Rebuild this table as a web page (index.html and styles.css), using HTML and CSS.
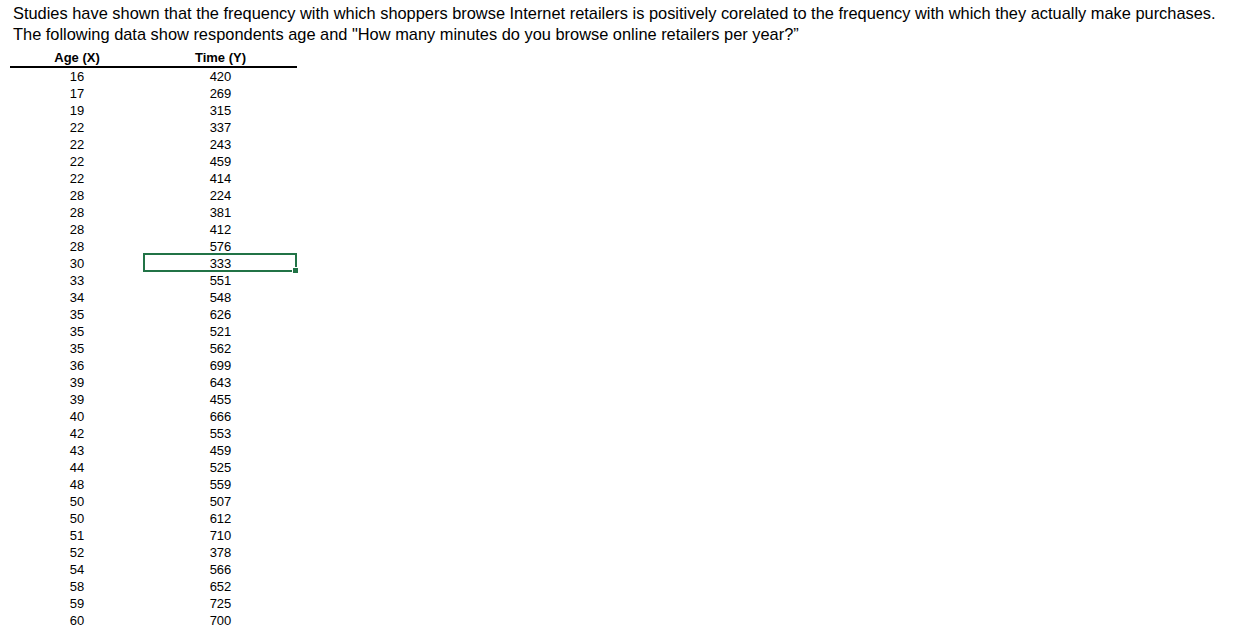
FILE: index.html
```html
<!DOCTYPE html>
<html lang="en">
<head>
  <meta charset="UTF-8">
  <title>Age vs browsing time</title>
  <link rel="stylesheet" href="styles.css">
</head>
<body>

  <p class="intro">
    Studies have shown that the frequency with which shoppers browse Internet retailers is positively corelated to the frequency with which they actually make purchases.<br>
    The following data show respondents age and "How many minutes do you browse online retailers per year?”
  </p>

  <table class="sheet">
    <thead>
      <tr><th class="col-x">Age (X)</th><th class="col-y">Time (Y)</th></tr>
    </thead>
    <tbody>
      <tr><td>16</td><td>420</td></tr>
      <tr><td>17</td><td>269</td></tr>
      <tr><td>19</td><td>315</td></tr>
      <tr><td>22</td><td>337</td></tr>
      <tr><td>22</td><td>243</td></tr>
      <tr><td>22</td><td>459</td></tr>
      <tr><td>22</td><td>414</td></tr>
      <tr><td>28</td><td>224</td></tr>
      <tr><td>28</td><td>381</td></tr>
      <tr><td>28</td><td>412</td></tr>
      <tr><td>28</td><td>576</td></tr>
      <tr><td>30</td><td class="selected">333</td></tr>
      <tr><td>33</td><td>551</td></tr>
      <tr><td>34</td><td>548</td></tr>
      <tr><td>35</td><td>626</td></tr>
      <tr><td>35</td><td>521</td></tr>
      <tr><td>35</td><td>562</td></tr>
      <tr><td>36</td><td>699</td></tr>
      <tr><td>39</td><td>643</td></tr>
      <tr><td>39</td><td>455</td></tr>
      <tr><td>40</td><td>666</td></tr>
      <tr><td>42</td><td>553</td></tr>
      <tr><td>43</td><td>459</td></tr>
      <tr><td>44</td><td>525</td></tr>
      <tr><td>48</td><td>559</td></tr>
      <tr><td>50</td><td>507</td></tr>
      <tr><td>50</td><td>612</td></tr>
      <tr><td>51</td><td>710</td></tr>
      <tr><td>52</td><td>378</td></tr>
      <tr><td>54</td><td>566</td></tr>
      <tr><td>58</td><td>652</td></tr>
      <tr><td>59</td><td>725</td></tr>
      <tr><td>60</td><td>700</td></tr>
    </tbody>
  </table>

</body>
</html>
```

FILE: styles.css
```css
:root{
  --excel-green:#217346;
}

*{ box-sizing:border-box; }
html,body{
  margin:0; padding:0;
  background:#fff;
  color:#000;
  font-family:"Liberation Sans", Arial, sans-serif;
}

/* ===== question text ===== */
.intro{
  margin:0;
  padding:3px 13px 0;
  font-size:16.4px;
  line-height:21px;
}

/* ===== data table ===== */
.sheet{
  margin-left:10px;
  border-collapse:collapse;
  font-size:13px;
}
.sheet th{
  padding:5px 0 1px;
  line-height:15px;
  font-weight:700;
  text-align:center;
  vertical-align:top;
  border-bottom:2px solid #000;
}
.col-x{ width:134px; }
.col-y{ width:153px; }

.sheet td{
  height:17px;
  padding:0;
  line-height:17px;
  text-align:center;
}

/* active cell, as in the spreadsheet */
.sheet td.selected{ position:relative; }
.sheet td.selected::after{
  content:"";
  position:absolute;
  top:-2px; left:-1px; right:0; bottom:0;
  border:2px solid var(--excel-green);
}
.sheet td.selected::before{
  content:"";
  position:absolute;
  right:-2px; bottom:-2px;
  width:5px; height:5px;
  background:var(--excel-green);
  border:1px solid #fff;
  box-sizing:content-box;
  z-index:1;
}
```
